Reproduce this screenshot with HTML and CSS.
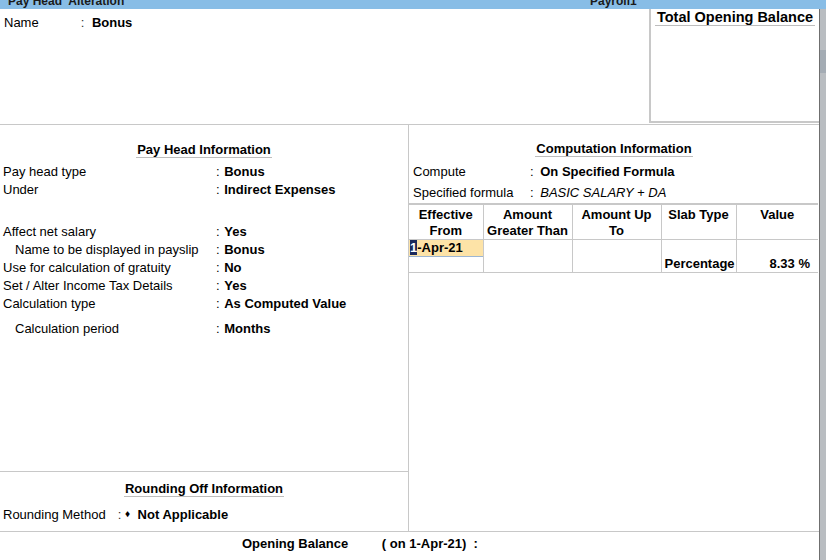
FILE: index.html
```html
<!DOCTYPE html>
<html lang="en">
<head>
  <meta charset="UTF-8" />
  <title>Pay Head Alteration</title>
  <link rel="stylesheet" href="styles.css">
</head>
<body>
  <div class="titlebar">
    <span class="title-left">Pay Head&nbsp; Alteration</span>
    <span class="title-center">Payroll1</span>
  </div>
  <div class="window">
    <div class="screen">
      <div class="head">
        <div class="name-row">
          <span class="name-label">Name</span>
          <span class="colon">:</span>
          <b class="name-value">Bonus</b>
        </div>
        <div class="total-box">
          <span class="box-title">Total Opening Balance</span>
        </div>
      </div>

      <div class="middle">
        <div class="left-pane">
          <div class="info">
            <div class="section-title"><span>Pay Head Information</span></div>
            <div class="fields">
              <div class="row"><span class="label">Pay head type</span><span class="value">: <b>Bonus</b></span></div>
              <div class="row"><span class="label">Under</span><span class="value">: <b>Indirect Expenses</b></span></div>
              <div class="row gap-before"><span class="label">Affect net salary</span><span class="value">: <b>Yes</b></span></div>
              <div class="row"><span class="label sub">Name to be displayed in payslip</span><span class="value">: <b>Bonus</b></span></div>
              <div class="row"><span class="label">Use for calculation of gratuity</span><span class="value">: <b>No</b></span></div>
              <div class="row"><span class="label">Set / Alter Income Tax Details</span><span class="value">: <b>Yes</b></span></div>
              <div class="row"><span class="label">Calculation type</span><span class="value">: <b>As Computed Value</b></span></div>
              <div class="row period"><span class="label sub">Calculation period</span><span class="value">: <b>Months</b></span></div>
            </div>
          </div>
          <div class="rounding">
            <div class="section-title"><span>Rounding Off Information</span></div>
            <div class="round-row">
              <span class="round-label">Rounding Method</span>
              <span class="colon">:</span>
              <span class="diamond">&#9830;</span>
              <b>Not Applicable</b>
            </div>
          </div>
        </div>

        <div class="right-pane">
          <div class="section-title"><span>Computation Information</span></div>
          <div class="comp-row first"><span class="comp-label">Compute</span><span>: <b>On Specified Formula</b></span></div>
          <div class="comp-row formula"><span class="comp-label">Specified formula</span><span>: <i>BASIC SALARY + DA</i></span></div>
          <table class="slabs">
            <thead>
              <tr>
                <th class="c1">Effective<br>From</th>
                <th class="c2">Amount<br>Greater Than</th>
                <th class="c3">Amount Up<br>To</th>
                <th class="c4">Slab Type<br>&nbsp;</th>
                <th class="c5">Value<br>&nbsp;</th>
              </tr>
            </thead>
            <tbody>
              <tr>
                <td class="c1"><span class="date-cell"><span class="cursor">1</span>-Apr-21</span></td>
                <td></td>
                <td></td>
                <td class="slab-type">Percentage</td>
                <td class="slab-value">8.33 %</td>
              </tr>
            </tbody>
          </table>
        </div>
      </div>

      <div class="footer">
        <b class="ob-label">Opening Balance</b>
        <b class="ob-date">( on 1-Apr-21)&nbsp; :</b>
      </div>
    </div>
    <div class="scrollbar"><div class="thumb"></div></div>
  </div>
</body>
</html>
```

FILE: styles.css
```css
* {
  box-sizing: border-box;
}
html, body {
  margin: 0;
  height: 100%;
  overflow: hidden;
}
body {
  font-family: "Liberation Sans", Arial, sans-serif;
  font-size: 13px;
  color: #000;
  background: #fff;
}
b {
  font-weight: bold;
}

.titlebar {
  height: 9px;
  background: #88bde6;
  position: relative;
  overflow: hidden;
  font-weight: bold;
  font-size: 12px;
  line-height: 14px;
  color: #1a1a1a;
}
.title-left {
  position: absolute;
  left: 8px;
  top: -6px;
}
.title-center {
  position: absolute;
  left: 590px;
  top: -6px;
}

.window {
  display: flex;
  height: 551px;
}
.screen {
  width: 819px;
  display: flex;
  flex-direction: column;
}
.scrollbar {
  width: 7px;
  background: #b9bdc1;
  border-left: 1px solid #6f6f6f;
  padding-top: 41px;
}
.thumb {
  height: 23px;
  background: #a4acb4;
}

/* top: name + total opening balance */
.head {
  display: flex;
  height: 116px;
  border-bottom: 1px solid #c8c8c8;
}
.name-row {
  flex: 1;
  padding: 6px 0 0 4px;
  line-height: 16px;
}
.name-label {
  display: inline-block;
  width: 73px;
}
.colon {
  color: #333;
}
.name-value {
  margin-left: 4px;
}
.total-box {
  width: 170px;
  height: 114px;
  border-left: 2px solid #c8c8c8;
  border-bottom: 2px solid #c8c8c8;
  text-align: center;
}
.box-title {
  display: inline-block;
  font-weight: bold;
  font-size: 14.5px;
  line-height: 16px;
  padding: 0 2px;
  border-bottom: 1px solid #bdbdbd;
}

/* middle panes */
.middle {
  display: flex;
  flex: 1;
  border-bottom: 1px solid #c8c8c8;
}
.left-pane {
  width: 409px;
  border-right: 1px solid #c8c8c8;
  display: flex;
  flex-direction: column;
}
.info {
  flex: 1;
  padding-top: 17px;
  border-bottom: 1px solid #c8c8c8;
}
.section-title {
  text-align: center;
  font-weight: bold;
  line-height: 15px;
}
.section-title span {
  display: inline-block;
  padding: 0 1px;
  border-bottom: 1px solid #bdbdbd;
}
.fields {
  padding-top: 5px;
}
.row {
  display: flex;
  line-height: 18px;
}
.label {
  width: 216px;
  padding-left: 3px;
}
.label.sub {
  padding-left: 15px;
}
.row.gap-before {
  margin-top: 24px;
}
.row.period {
  margin-top: 7px;
}
.value b {
  margin-left: 1px;
}

.rounding {
  height: 59px;
  padding-top: 9px;
}
.round-row {
  line-height: 18px;
  padding: 9px 0 0 3px;
}
.round-label {
  display: inline-block;
  width: 111px;
}
.diamond {
  font-size: 10px;
  margin: 0 4px 0 0;
  position: relative;
  top: -2px;
}

.right-pane {
  flex: 1;
  padding-top: 16px;
}
.comp-row {
  display: flex;
  line-height: 18px;
  padding-left: 4px;
}
.comp-row.first {
  margin-top: 6px;
}
.comp-label {
  width: 117px;
}
.comp-row b,
.comp-row i {
  margin-left: 3px;
}
.formula {
  margin-top: 3px;
}

.slabs {
  margin-top: 1px;
  width: 409px;
  border-collapse: collapse;
  border-top: 2px solid #c8c8c8;
  table-layout: fixed;
}
.slabs th {
  font-weight: bold;
  line-height: 16px;
  padding: 2px 0 0;
  vertical-align: top;
  border-right: 1px solid #c8c8c8;
  border-bottom: 1px solid #c8c8c8;
}
.slabs td {
  height: 33px;
  padding: 0;
  border-right: 1px solid #c8c8c8;
  border-bottom: 1px solid #c8c8c8;
  font-weight: bold;
  vertical-align: bottom;
  line-height: 16px;
}
.slabs th:last-child,
.slabs td:last-child {
  border-right: none;
}
.c1 { width: 74px; }
.c2 { width: 89px; }
.c3 { width: 89px; }
.c4 { width: 75px; }
.c5 { width: 82px; }
.slabs td.c1 {
  vertical-align: top;
}
.date-cell {
  display: block;
  height: 17px;
  background: #fde3a7;
  border-bottom: 1px solid #9cb6d3;
  padding-left: 1px;
  line-height: 16px;
}
.cursor {
  background: #1b2a5c;
  color: #fff;
}
.slab-type {
  padding-left: 3px !important;
}
.slab-value {
  text-align: right;
  padding-right: 8px !important;
}

.footer {
  height: 28px;
  line-height: 24px;
  padding-left: 242px;
}
.ob-date {
  margin-left: 30px;
}
```
